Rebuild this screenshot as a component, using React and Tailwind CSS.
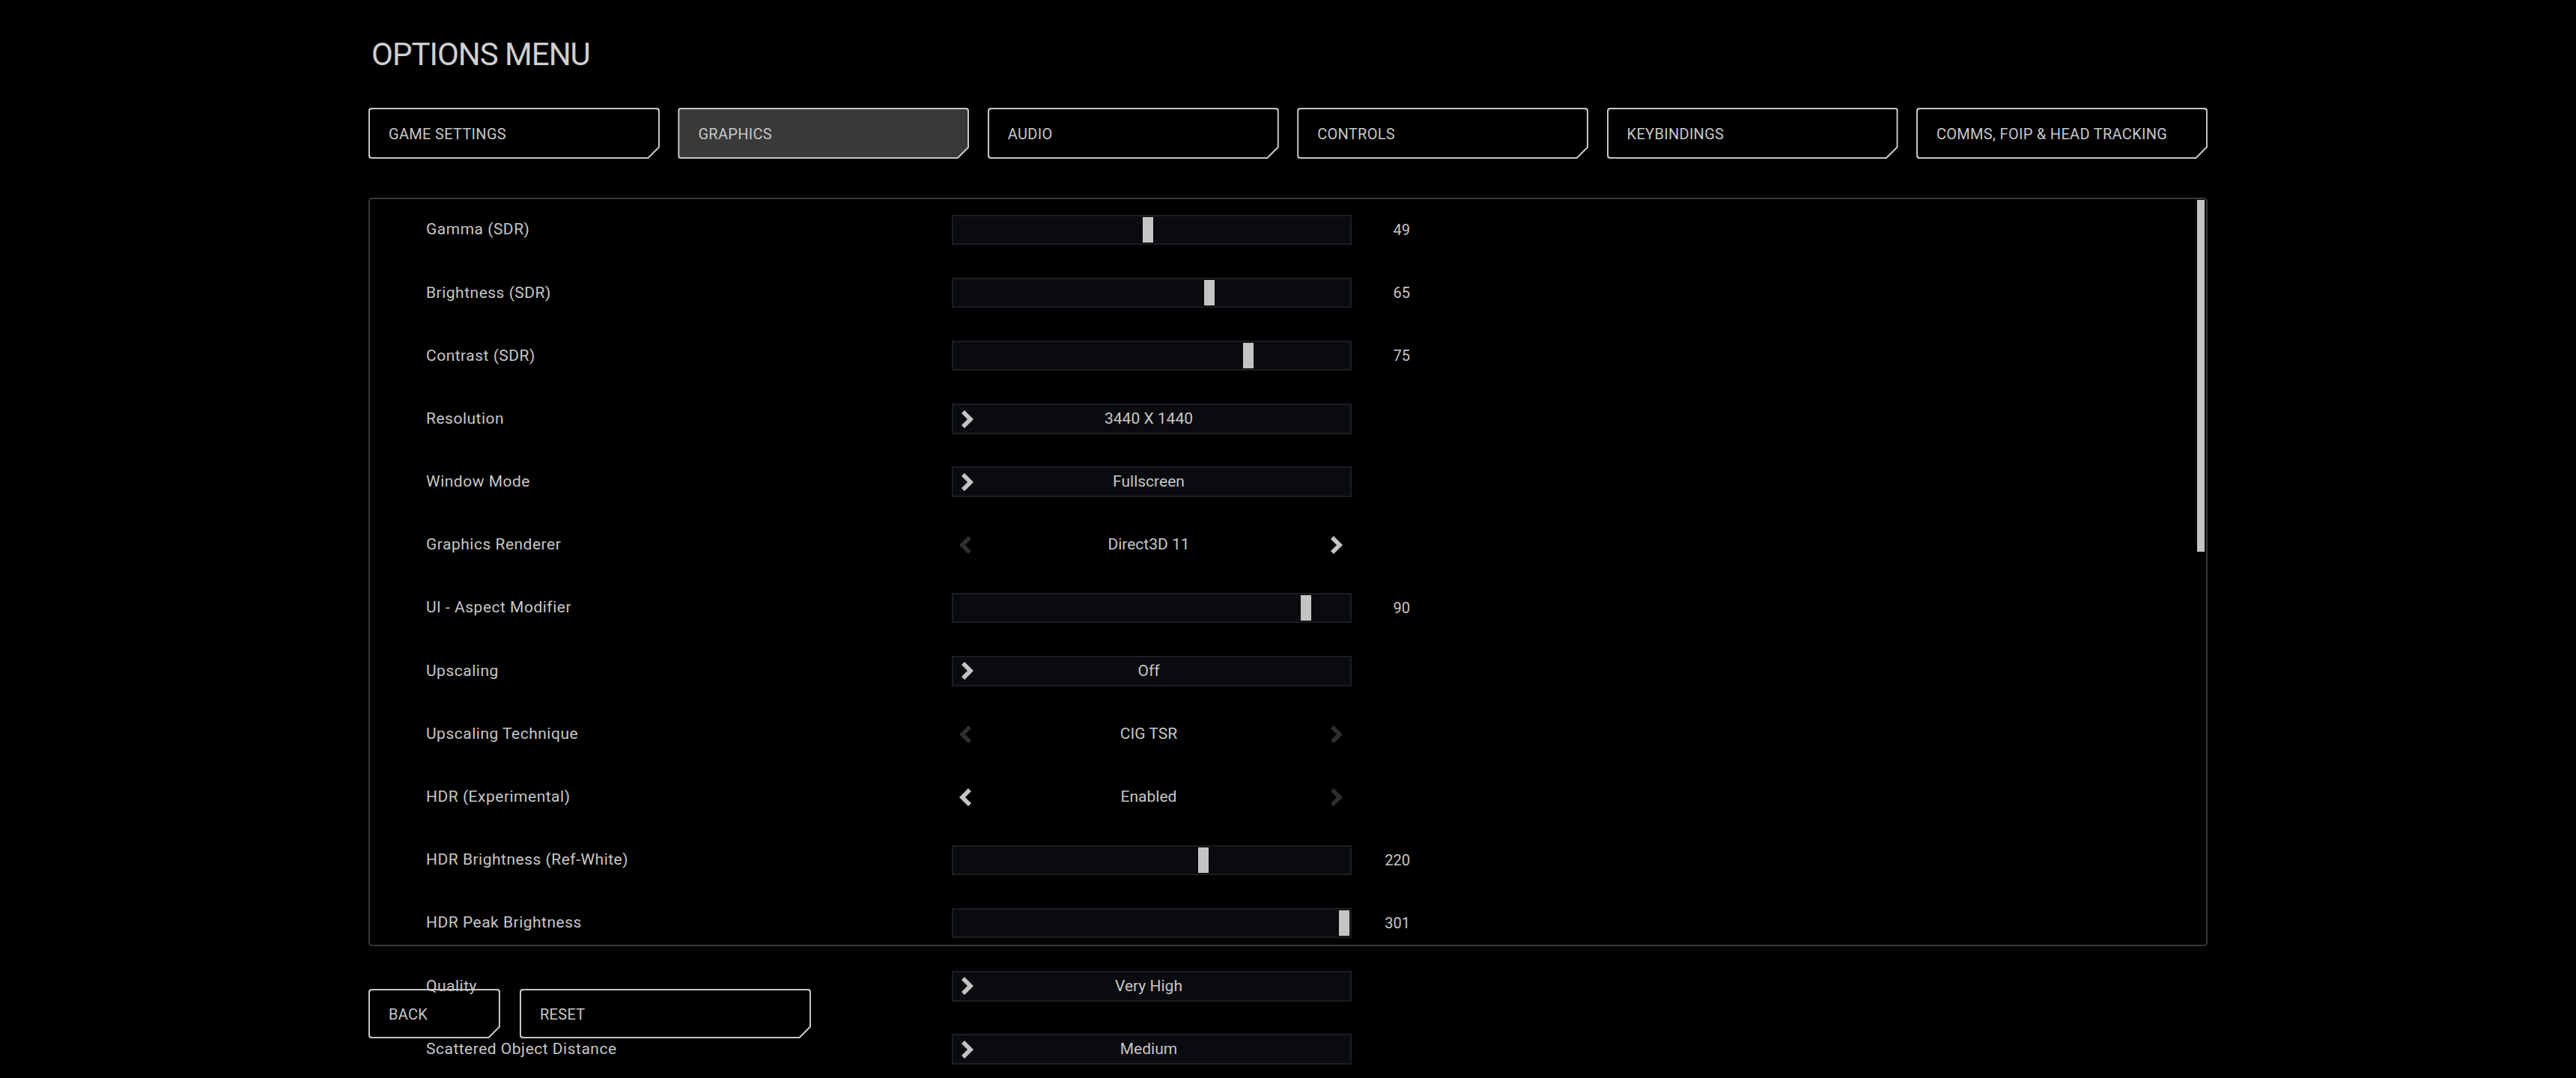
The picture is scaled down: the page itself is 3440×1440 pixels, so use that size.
import React from 'react';

const TABS = ['Game Settings', 'Graphics', 'Audio', 'Controls', 'Keybindings', 'Comms, FOIP & Head Tracking'];

const ROWS = [
  { label: 'Gamma (SDR)', type: 'slider', value: 49, pos: 0.49 },
  { label: 'Brightness (SDR)', type: 'slider', value: 65, pos: 0.65 },
  { label: 'Contrast (SDR)', type: 'slider', value: 75, pos: 0.75 },
  { label: 'Resolution', type: 'select', value: '3440 X 1440' },
  { label: 'Window Mode', type: 'select', value: 'Fullscreen' },
  { label: 'Graphics Renderer', type: 'cycle', value: 'Direct3D 11', prev: false, next: true },
  { label: 'UI - Aspect Modifier', type: 'slider', value: 90, pos: 0.9 },
  { label: 'Upscaling', type: 'select', value: 'Off' },
  { label: 'Upscaling Technique', type: 'cycle', value: 'CIG TSR', prev: false, next: false },
  { label: 'HDR (Experimental)', type: 'cycle', value: 'Enabled', prev: true, next: false },
  { label: 'HDR Brightness (Ref-White)', type: 'slider', value: 220, pos: 0.634 },
  { label: 'HDR Peak Brightness', type: 'slider', value: 301, pos: 1 },
  { label: 'Quality', type: 'select', value: 'Very High' },
  { label: 'Scattered Object Distance', type: 'select', value: 'Medium' },
];

function Chevron({ dir = 'right', active = true }) {
  return (
    <svg width="16" height="24" viewBox="0 0 16 24" className={`shrink-0 ${active ? 'text-[#c4c4c4]' : 'text-[#2e2e2e]'}`}>
      <polygon
        points={dir === 'right' ? '0,4 4,0 16,12 4,24 0,20 8,12' : '16,4 12,0 0,12 12,24 16,20 8,12'}
        fill="currentColor"
      />
    </svg>
  );
}

// bordered button with the cut bottom-right corner
function CutButton({ label, active, className }) {
  return (
    <div className={`${className} shrink-0 rounded-[4px] bg-[#c4c4c4] p-[2px] [clip-path:polygon(0_0,100%_0,100%_calc(100%_-_15px),calc(100%_-_15px)_100%,0_100%)]`}>
      <div className={`flex h-full w-full items-center rounded-[3px] pl-[25px] pt-[1px] text-[20px] uppercase tracking-[0.3px] text-[#c6c6c6] [clip-path:polygon(0_0,100%_0,100%_calc(100%_-_14px),calc(100%_-_14px)_100%,0_100%)] ${active ? 'bg-[#393939]' : 'bg-black'}`}>
        {label}
      </div>
    </div>
  );
}

function Control({ row }) {
  if (row.type === 'slider') {
    return (
      <div className="flex items-center">
        <div className="relative h-[40px] w-[534px] border-2 border-[#1a1e24] bg-[#090b0e]">
          <div
            className="absolute top-[1px] h-[34px] w-[14px] bg-[#c4c4c4]"
            style={{ left: 1 + row.pos * 514 }}
          />
        </div>
        <div className="w-[78px] text-right text-[20px] text-[#c6c6c6]">{row.value}</div>
      </div>
    );
  }
  if (row.type === 'select') {
    return (
      <div className="flex h-[41px] w-[534px] items-center border-2 border-[#1a1e24] bg-[#090b0e] pl-[11px]">
        <Chevron />
        <span className="flex-1 pr-[35px] text-center text-[21px] text-[#c6c6c6]">{row.value}</span>
      </div>
    );
  }
  return (
    <div className="flex h-[41px] w-[534px] items-center pl-[10px] pr-[12px]">
      <Chevron dir="left" active={row.prev} />
      <span className="flex-1 pr-[6px] text-center text-[21px] text-[#c6c6c6]">{row.value}</span>
      <Chevron active={row.next} />
    </div>
  );
}

export default function App() {
  return (
    <div className="h-[1440px] w-full overflow-hidden bg-black font-['Roboto','Liberation_Sans',sans-serif]">
      <div className="ml-[492px] w-[2456px] pt-[52px]">
        <h1 className="pl-[4px] text-[42px] font-normal leading-none tracking-[-1px] text-[#cfcfcf]">OPTIONS MENU</h1>

        {/* Tabs */}
        <div className="mt-[50px] flex justify-between">
          {TABS.map(t => (
            <CutButton key={t} label={t} active={t === 'Graphics'} className="h-[68px] w-[389px]" />
          ))}
        </div>

        {/* Settings list, overflows past the panel like the game does */}
        <div className="relative mt-[52px] h-[1000px] rounded-[5px] border-2 border-[#383838]">
          <div className="absolute right-[2px] top-[1px] h-[470px] w-[10px] bg-[#c4c4c4]" />
          <div className="relative z-10 -mt-[1px]">
            {ROWS.map(row => (
              <div key={row.label} className="flex h-[84.2px] items-center pl-[75px]">
                <div className="w-[702px] shrink-0 text-[21px] tracking-[0.5px] text-[#c6c6c6]">{row.label}</div>
                <Control row={row} />
              </div>
            ))}
          </div>
        </div>

        {/* Footer buttons */}
        <div className="mt-[57px] flex gap-[26px]">
          <CutButton label="Back" className="h-[66px] w-[176px]" />
          <CutButton label="Reset" className="h-[66px] w-[389px]" />
        </div>
      </div>
    </div>
  );
}
